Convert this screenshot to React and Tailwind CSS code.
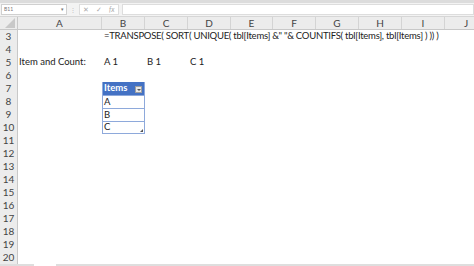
import React from 'react';

const COLS = [
    { l: 'A', w: 84 },
    { l: 'B', w: 43 },
    { l: 'C', w: 43 },
    { l: 'D', w: 43 },
    { l: 'E', w: 42 },
    { l: 'F', w: 43 },
    { l: 'G', w: 43 },
    { l: 'H', w: 43 },
    { l: 'I', w: 43 },
    { l: 'J', w: 43 },
];

const ROWS = [3, 4, 5, 6, 7, 8, 9, 10, 11, 12, 13, 14, 15, 16, 17, 18, 19, 20];

const FORMULA = '=TRANSPOSE( SORT( UNIQUE( tbl[Items] &" "& COUNTIFS( tbl[Items], tbl[Items] ) )) )';

const Cell = ({ w, children, className = '' }) => (
    <div className={`h-[13px] shrink-0 flex items-center whitespace-nowrap ${className}`} style={{ width: w }}>
        {children}
    </div>
);

const rowContent = (r) => {
    if (r === 3) {
        return (
            <>
                <Cell w={84} />
                <Cell w={43} className="pl-[2px] overflow-visible tracking-[-0.25px]">{FORMULA}</Cell>
            </>
        );
    }
    if (r === 5) {
        return (
            <>
                <Cell w={84} className="pl-[1px]">Item and Count:</Cell>
                <Cell w={43} className="pl-[2px]">A 1</Cell>
                <Cell w={43} className="pl-[2px]">B 1</Cell>
                <Cell w={43} className="pl-[2px]">C 1</Cell>
            </>
        );
    }
    if (r === 7) {
        return (
            <>
                <Cell w={84} />
                <Cell w={43} className="bg-[#4472c4] text-white font-bold pl-[1px] relative border-x border-[#8ea9db]">
                    Items
                    <span className="absolute right-[2px] top-[4px] w-[7px] h-[7px] bg-[#e8e8e8] border border-[#a0a0a0] flex items-center justify-center">
                        <span className="block w-0 h-0 border-l-[2px] border-r-[2px] border-t-[2px] border-l-transparent border-r-transparent border-t-[#555]" />
                    </span>
                </Cell>
            </>
        );
    }
    if (r >= 8 && r <= 10) {
        const v = { 8: 'A', 9: 'B', 10: 'C' }[r];
        return (
            <>
                <Cell w={84} />
                <Cell w={43} className={`pl-[1px] relative border-x border-t border-[#8ea9db] ${r === 10 ? 'border-b' : ''}`}>
                    {v}
                    {r === 10 && (
                        <svg className="absolute right-[1px] bottom-[1px]" width="3" height="3" viewBox="0 0 3 3"><polygon points="3,0 3,3 0,3" fill="#555" /></svg>
                    )}
                </Cell>
            </>
        );
    }
    return null;
};

export default function App() {
    return (
        <div className="w-[474px] h-[266px] bg-white overflow-hidden flex flex-col text-[9.5px] text-[#222]" style={{ fontFamily: 'Lato, "Open Sans", sans-serif' }}>
            {/* ribbon edge */}
            <div className="h-[3px] bg-[#dcdcdc] shrink-0" />
            {/* formula bar */}
            <div className="h-[14px] shrink-0 flex items-center bg-[#f3f3f3] border-b border-[#d6d6d6]">
                <div className="w-[66px] h-[11px] ml-[1px] bg-white border border-[#d0d0d0] flex items-center justify-between px-[2px] text-[5px] text-[#777]">
                    <span>B11</span>
                    <span className="text-[5px]">▾</span>
                </div>
                <span className="mx-[3px] text-[6px] text-[#bbb]">⋮</span>
                <div className="w-[40px] h-[11px] bg-white border border-[#ddd] flex items-center justify-around text-[7px] text-[#aaa]">
                    <span>✕</span>
                    <span>✓</span>
                    <span className="italic">fx</span>
                </div>
                <div className="flex-1 h-[11px] ml-[3px] bg-white border border-[#ddd]" />
            </div>
            {/* column headers */}
            <div className="h-[13px] shrink-0 flex bg-[#ececec] border-b border-[#c8c8c8] text-[#444] text-[10px]">
                <div className="w-[18px] shrink-0 relative border-r border-[#c8c8c8]">
                    <svg className="absolute right-[2px] bottom-[1px]" width="10" height="10" viewBox="0 0 10 10"><polygon points="10,0 10,10 0,10" fill="#c8c8c8" /></svg>
                </div>
                {COLS.map(c => (
                    <div key={c.l} className="shrink-0 flex items-center justify-center border-r border-[#d4d4d4]" style={{ width: c.w }}>
                        {c.l}
                    </div>
                ))}
            </div>
            {/* rows */}
            <div className="flex-1 flex">
                <div className="w-[18px] shrink-0 bg-[#ececec] border-r border-[#c8c8c8] text-[#444] text-[10px]">
                    {ROWS.map(r => (
                        <div key={r} className="h-[13px] flex items-center justify-center">{r}</div>
                    ))}
                </div>
                <div className="flex-1">
                    {ROWS.map(r => (
                        <div key={r} className="h-[13px] flex">{rowContent(r)}</div>
                    ))}
                </div>
            </div>
            {/* sheet tabs */}
            <div className="h-[4px] shrink-0 bg-[#dedede] flex">
                <div className="w-[34px]" />
                <div className="w-[22px] bg-white" />
            </div>
        </div>
    );
}
